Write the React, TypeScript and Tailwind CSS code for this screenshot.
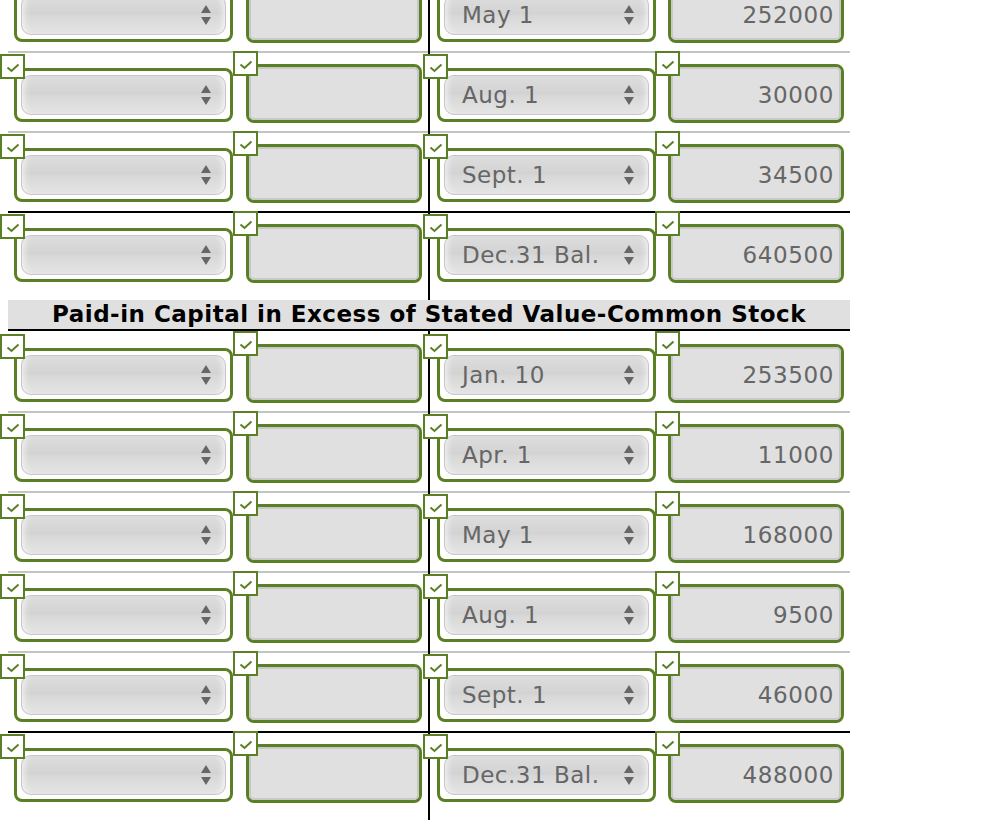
import React from "react";

type Entry = { date: string; amount: string; balance?: boolean; first?: boolean };

const stockRows: Entry[] = [
  { date: "May 1", amount: "252000", first: true },
  { date: "Aug. 1", amount: "30000" },
  { date: "Sept. 1", amount: "34500" },
  { date: "Dec.31 Bal.", amount: "640500", balance: true },
];

const paidInRows: Entry[] = [
  { date: "Jan. 10", amount: "253500", first: true },
  { date: "Apr. 1", amount: "11000" },
  { date: "May 1", amount: "168000" },
  { date: "Aug. 1", amount: "9500" },
  { date: "Sept. 1", amount: "46000" },
  { date: "Dec.31 Bal.", amount: "488000", balance: true },
];

function Check({ className }: { className: string }) {
  return (
    <div className={`absolute z-10 flex h-[25px] w-[25px] items-center justify-center border-2 border-[#5b7f24] bg-white ${className}`}>
      <svg width="14" height="10" viewBox="0 0 14 10" className="mt-[2px]">
        <path d="M1.5 4.5 L5.5 8 L12.5 1.5" fill="none" stroke="#5b7f24" strokeWidth="2" />
      </svg>
    </div>
  );
}

function SelectBox({ value }: { value: string }) {
  return (
    <div className="relative mt-[15px] flex h-[54px] w-[219px] shrink-0 items-center justify-center rounded-[8px] border-[3px] border-[#5b7f24] bg-white">
      <Check className="-left-[17px] -top-[17px]" />
      <div className="flex h-[40px] w-[205px] items-center justify-between rounded-[10px] border border-[#c6c6c6] bg-[linear-gradient(to_bottom,#dddddd_0%,#d3d3d3_47%,#d8d8d8_53%,#e5e5e5_100%)] pl-[17px] pr-[13px] shadow-[inset_8px_0_6px_-6px_rgba(255,255,255,0.7),inset_-8px_0_6px_-6px_rgba(255,255,255,0.7)]">
        <span className="text-[23px] leading-none tracking-[0.5px] text-[#666666]">{value}</span>
        <svg width="12" height="22" viewBox="0 0 12 22">
          <path d="M6 1 L11 9 L1 9 Z" fill="#666666" />
          <path d="M1 13 L11 13 L6 21 Z" fill="#666666" />
        </svg>
      </div>
    </div>
  );
}

function AmountBox({ value }: { value: string }) {
  return (
    <div className="relative mt-[11px] h-[59px] w-[176px] shrink-0 rounded-[8px] border-[3px] border-[#5b7f24] bg-white">
      <Check className="-left-[16px] -top-[16px]" />
      <div className="flex h-full w-full items-center justify-end rounded-[5px] border-2 border-[#c8c8c8] bg-[#e0e0e0] pr-[5px] pt-[3px]">
        <span className="text-[23px] leading-none tracking-[0.6px] text-[#666666]">{value}</span>
      </div>
    </div>
  );
}

function Row({ entry }: { entry: Entry }) {
  const line = entry.first ? "border-transparent" : entry.balance ? "border-black" : "border-[#c4c4c4]";
  return (
    <div className={`flex ${entry.balance ? "h-[89px]" : "h-[80px]"}`}>
      <div className={`flex w-[420px] items-start border-t-2 ${line}`}>
        <div className="ml-[6px]">
          <SelectBox value="" />
        </div>
        <div className="ml-[13px]">
          <AmountBox value="" />
        </div>
      </div>
      <div className="w-[2px] bg-black" />
      <div className={`flex w-[420px] items-start border-t-2 ${line}`}>
        <div className="ml-[7px]">
          <SelectBox value={entry.date} />
        </div>
        <div className="ml-[12px]">
          <AmountBox value={entry.amount} />
        </div>
      </div>
    </div>
  );
}

export default function App() {
  return (
    <div className="h-[824px] w-[996px] overflow-hidden bg-white font-['DejaVu_Sans',sans-serif]">
      <div className="-mt-[29px] w-[850px] pl-[8px]">
        {/* Common Stock (cut off at top) */}
        {stockRows.map((r, i) => (
          <Row key={`a${i}`} entry={r} />
        ))}

        {/* Account heading */}
        <div className="flex h-[31px] items-center justify-center border-b-2 border-black bg-[#e0e0e0]">
          <span className="text-[23px] font-bold leading-none tracking-[0.5px] text-black">
            Paid-in Capital in Excess of Stated Value-Common Stock
          </span>
        </div>

        {paidInRows.map((r, i) => (
          <Row key={`b${i}`} entry={r} />
        ))}
      </div>
    </div>
  );
}
